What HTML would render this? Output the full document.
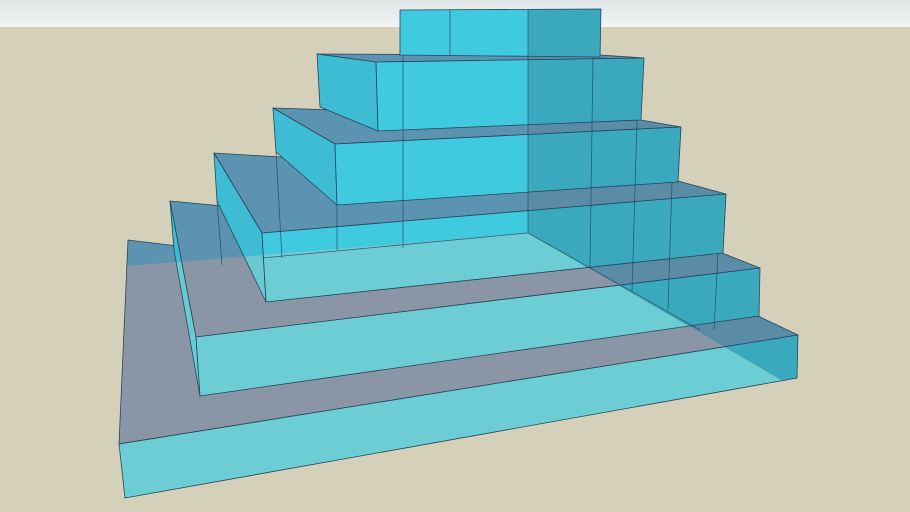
<!DOCTYPE html>
<html><head><meta charset="utf-8"><style>
html,body{margin:0;padding:0;width:910px;height:512px;overflow:hidden;background:#d4d0b9}
svg{display:block}
.A .t{fill:#5b93b0}.A .f{fill:#3fcae0}.A .l{fill:#3dbcd3}
.B .t{fill:#5a8ca8}.B .f{fill:#3aa9be}.B .l{fill:#3aa9be}
.C .t{fill:#8a96a6}.C .f{fill:#6dcdd5}.C .l{fill:#6acad3}
polygon{stroke:#24475a;stroke-width:0.8;stroke-linejoin:round}
</style></head><body>
<svg width="910" height="512" viewBox="0 0 910 512" xmlns="http://www.w3.org/2000/svg">
<defs>
<linearGradient id="sky" x1="0" y1="0" x2="0" y2="1"><stop offset="0" stop-color="#dfe5e6"/><stop offset="1" stop-color="#f2f4f3"/></linearGradient>
<clipPath id="cA"><polygon points="0,0 528,0 528,233 0,277" style="stroke:none"/></clipPath>
<clipPath id="cB"><polygon points="528,0 910,0 910,455 528,233" style="stroke:none"/></clipPath>
<clipPath id="cC"><polygon points="0,277 528,233 910,455 910,512 0,512" style="stroke:none"/></clipPath>
</defs>
<rect x="0" y="0" width="910" height="27" fill="url(#sky)"/>
<rect x="0" y="27" width="910" height="485" fill="#d4d0b9"/>

<g class="A" clip-path="url(#cA)">
<polygon class="t" points="128,240 758,316 798,335 119,444"/>
<polygon class="f" points="119,444 798,335 797,378 125,498"/>
<polygon class="t" points="170,201 722,253 760,268 196,337"/>
<polygon class="l" points="170,201 196,337 200,396 174,250"/>
<polygon class="f" points="196,337 760,268 759,316 200,396"/>
<polygon class="t" points="214,153 678,181 726,194 262,233"/>
<polygon class="l" points="214,153 262,233 266,302 217,201"/>
<polygon class="f" points="262,233 726,194 723,253 266,302"/>
<polygon class="t" points="273,108 641,120 681,127 335,144"/>
<polygon class="l" points="273,108 335,144 337,205 276,152"/>
<polygon class="f" points="335,144 681,127 678,182 337,205"/>
<polygon class="t" points="317,54 600,55 644,58 376,62"/>
<polygon class="l" points="317,54 376,62 378,131 320,107"/>
<polygon class="f" points="376,62 644,58 641,120 378,131"/>
<polygon class="f" points="400,10 601,9 600,57 400,55"/>
</g>
<g class="B" clip-path="url(#cB)">
<polygon class="t" points="128,240 758,316 798,335 119,444"/>
<polygon class="f" points="119,444 798,335 797,378 125,498"/>
<polygon class="t" points="170,201 722,253 760,268 196,337"/>
<polygon class="f" points="196,337 760,268 759,316 200,396"/>
<polygon class="t" points="214,153 678,181 726,194 262,233"/>
<polygon class="f" points="262,233 726,194 723,253 266,302"/>
<polygon class="t" points="273,108 641,120 681,127 335,144"/>
<polygon class="f" points="335,144 681,127 678,182 337,205"/>
<polygon class="t" points="317,54 600,55 644,58 376,62"/>
<polygon class="f" points="376,62 644,58 641,120 378,131"/>
<polygon class="f" points="400,10 601,9 600,57 400,55"/>
</g>
<g class="C" clip-path="url(#cC)">
<polygon class="t" points="128,240 758,316 798,335 119,444"/>
<polygon class="f" points="119,444 798,335 797,378 125,498"/>
<polygon class="t" points="170,201 722,253 760,268 196,337"/>
<polygon class="l" points="170,201 196,337 200,396 174,250"/>
<polygon class="f" points="196,337 760,268 759,316 200,396"/>
<polygon class="l" points="214,153 262,233 266,302 217,201"/>
<polygon class="f" points="262,233 726,194 723,253 266,302"/>
</g>
<g stroke="#24475a" stroke-width="0.8" fill="none" opacity="0.8">
<line x1="528" y1="9" x2="528" y2="233"/>
<line x1="450" y1="10" x2="450" y2="55"/>
<line x1="403" y1="55" x2="403" y2="248"/>
<line x1="528" y1="233" x2="700" y2="330"/>
<line x1="262" y1="258" x2="528" y2="233"/>
<line x1="593" y1="57" x2="590" y2="268"/>
<line x1="637" y1="120" x2="632" y2="292"/>
<line x1="672" y1="182" x2="668" y2="310"/>
<line x1="718" y1="253" x2="714" y2="330"/>
<line x1="337" y1="205" x2="337" y2="250"/>
<line x1="276" y1="152" x2="282" y2="258"/>
<line x1="217" y1="201" x2="222" y2="265"/>
</g>
</svg>
</body></html>
